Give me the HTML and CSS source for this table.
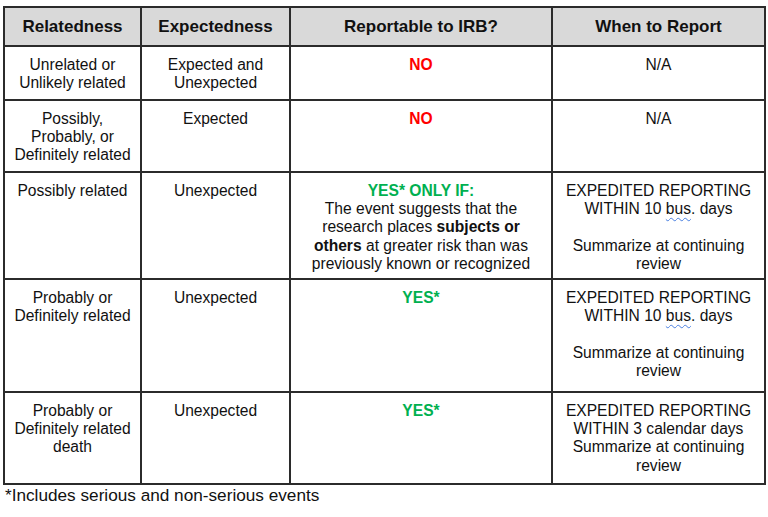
FILE: index.html
```html
<!DOCTYPE html>
<html lang="en">
<head>
<meta charset="utf-8">
<title>Reporting Table</title>
<link rel="stylesheet" href="styles.css">
</head>
<body>
<div class="page">
  <table class="grid">
    <colgroup>
      <col class="c1"><col class="c2"><col class="c3"><col class="c4">
    </colgroup>
    <thead>
      <tr class="head">
        <th>Relatedness</th>
        <th>Expectedness</th>
        <th>Reportable to IRB?</th>
        <th>When to Report</th>
      </tr>
    </thead>
    <tbody>
      <tr class="r1">
        <td>Unrelated or<br>Unlikely related</td>
        <td>Expected and<br>Unexpected</td>
        <td><span class="no">NO</span></td>
        <td>N/A</td>
      </tr>
      <tr class="r2">
        <td>Possibly,<br>Probably, or<br>Definitely related</td>
        <td>Expected</td>
        <td><span class="no">NO</span></td>
        <td>N/A</td>
      </tr>
      <tr class="r3">
        <td>Possibly related</td>
        <td>Unexpected</td>
        <td><span class="yes">YES* ONLY IF:</span><br>The event suggests that the<br>research places <b>subjects or</b><br><b>others</b> at greater risk than was<br>previously known or recognized</td>
        <td>EXPEDITED REPORTING<br>WITHIN 10 <span class="spell">bus</span>. days<br><br>Summarize at continuing<br>review</td>
      </tr>
      <tr class="r4">
        <td>Probably or<br>Definitely related</td>
        <td>Unexpected</td>
        <td><span class="yes">YES*</span></td>
        <td>EXPEDITED REPORTING<br>WITHIN 10 <span class="spell">bus</span>. days<br><br>Summarize at continuing<br>review</td>
      </tr>
      <tr class="r5">
        <td>Probably or<br>Definitely related<br>death</td>
        <td>Unexpected</td>
        <td><span class="yes">YES*</span></td>
        <td>EXPEDITED REPORTING<br>WITHIN 3 calendar days<br>Summarize at continuing<br>review</td>
      </tr>
    </tbody>
  </table>
  <p class="note">*Includes serious and non-serious events</p>
</div>
</body>
</html>
```

FILE: styles.css
```css
html, body {
  margin: 0;
  padding: 0;
  background: #ffffff;
}

.page {
  padding: 6px 0 0 3px;
  font-family: "Liberation Sans", Arial, sans-serif;
  color: #111111;
}

.grid {
  border-collapse: collapse;
  table-layout: fixed;
  width: 761px;
}

.c1 { width: 137px; }
.c2 { width: 149px; }
.c3 { width: 262px; }
.c4 { width: 213px; }

.grid th,
.grid td {
  border: 2px solid #2b2b2b;
  text-align: center;
  padding: 0 4px;
}

.grid th {
  background: #d9d9d9;
  font-size: 17px;
  font-weight: bold;
  line-height: 20px;
  vertical-align: middle;
  color: #111111;
}

.grid td {
  font-size: 15.6px;
  line-height: 18.2px;
  vertical-align: top;
  padding-top: 9px;
}

.head { height: 39px; }
.r1 { height: 54px; }
.r2 { height: 72px; }
.r3 { height: 107px; }
.r4 { height: 113px; }
.r5 { height: 92px; }

.no {
  color: #ff0000;
  font-weight: bold;
}

.yes {
  color: #00b050;
  font-weight: bold;
}

.spell {
  text-decoration: underline wavy #4a80e0;
  text-decoration-thickness: 1px;
  text-underline-offset: 3px;
}

.note {
  margin: 1px 0 0 2px;
  font-size: 17.2px;
  line-height: 19px;
  color: #111111;
}
```
